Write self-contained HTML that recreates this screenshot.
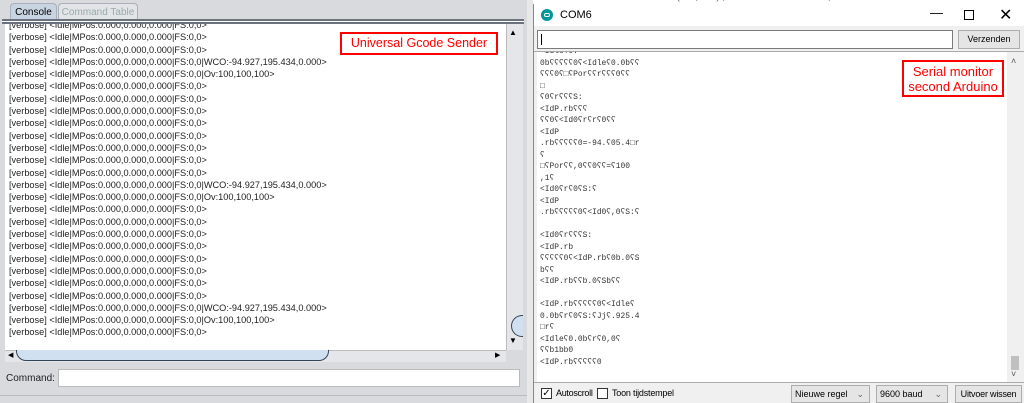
<!DOCTYPE html>
<html><head><meta charset="utf-8"><style>
*{box-sizing:border-box;margin:0;padding:0}
body{width:1024px;height:403px;overflow:hidden;background:#d9dbe0;font-family:"Liberation Sans",sans-serif;position:relative}
.abs{position:absolute}
#left{left:0;top:0;width:527px;height:403px;background:#d8dade}
.tab{position:absolute;top:3px;height:19px;font-size:10px;line-height:18px;text-align:center;border:1px solid #aab0ba;border-bottom:none;border-radius:4px 4px 0 0;white-space:nowrap}
#con{left:5px;top:24px;width:501px;height:326px;background:#fff;overflow:hidden;font-size:9.2px;color:#222;padding-left:4px}
#con div{height:12.3px;line-height:12.3px;white-space:nowrap}
#right{left:533px;top:4px;width:491px;height:399px;background:#f0f0f0;border-left:1px solid #888}
#out{left:537px;top:52px;width:470px;height:330px;background:#fff;overflow:hidden;font-family:"Liberation Mono","DejaVu Sans Mono",monospace;font-size:7.9px;color:#333;padding-left:3px}
#out div{height:11.5px;line-height:11.5px;white-space:pre}
.red{border:2px solid #f00;color:#f00;background:#fff;font-size:13px;text-align:center}
.sm{font-size:9px;color:#000;white-space:nowrap}
.box{border:1px solid #adadad;background:#e5e5e5}
</style></head><body>
<div class="abs" style="left:527px;top:0;width:6px;height:403px;background:#e8e8e8"></div>
<div id="left" class="abs">
 <div class="tab" style="left:10px;width:47px;background:#c9d4e2;color:#000">Console</div>
 <div class="tab" style="left:58px;width:80px;background:#e2e4e8;color:#9aa">Command Table</div>
 <div class="abs" style="left:2px;top:19px;width:522px;height:5px;border-top:2px solid #6a7280;border-bottom:2px solid #6a7280;background:#fff"></div>
 <div id="con" class="abs"><div style="margin-top:-5px">[verbose] &lt;Idle|MPos:0.000,0.000,0.000|FS:0,0&gt;</div>
<div>[verbose] &lt;Idle|MPos:0.000,0.000,0.000|FS:0,0&gt;</div><div>[verbose] &lt;Idle|MPos:0.000,0.000,0.000|FS:0,0&gt;</div>
<div>[verbose] &lt;Idle|MPos:0.000,0.000,0.000|FS:0,0|WCO:-94.927,195.434,0.000&gt;</div><div>[verbose] &lt;Idle|MPos:0.000,0.000,0.000|FS:0,0|Ov:100,100,100&gt;</div>
<div>[verbose] &lt;Idle|MPos:0.000,0.000,0.000|FS:0,0&gt;</div><div>[verbose] &lt;Idle|MPos:0.000,0.000,0.000|FS:0,0&gt;</div><div>[verbose] &lt;Idle|MPos:0.000,0.000,0.000|FS:0,0&gt;</div><div>[verbose] &lt;Idle|MPos:0.000,0.000,0.000|FS:0,0&gt;</div><div>[verbose] &lt;Idle|MPos:0.000,0.000,0.000|FS:0,0&gt;</div><div>[verbose] &lt;Idle|MPos:0.000,0.000,0.000|FS:0,0&gt;</div><div>[verbose] &lt;Idle|MPos:0.000,0.000,0.000|FS:0,0&gt;</div><div>[verbose] &lt;Idle|MPos:0.000,0.000,0.000|FS:0,0&gt;</div>
<div>[verbose] &lt;Idle|MPos:0.000,0.000,0.000|FS:0,0|WCO:-94.927,195.434,0.000&gt;</div><div>[verbose] &lt;Idle|MPos:0.000,0.000,0.000|FS:0,0|Ov:100,100,100&gt;</div>
<div>[verbose] &lt;Idle|MPos:0.000,0.000,0.000|FS:0,0&gt;</div><div>[verbose] &lt;Idle|MPos:0.000,0.000,0.000|FS:0,0&gt;</div><div>[verbose] &lt;Idle|MPos:0.000,0.000,0.000|FS:0,0&gt;</div><div>[verbose] &lt;Idle|MPos:0.000,0.000,0.000|FS:0,0&gt;</div><div>[verbose] &lt;Idle|MPos:0.000,0.000,0.000|FS:0,0&gt;</div><div>[verbose] &lt;Idle|MPos:0.000,0.000,0.000|FS:0,0&gt;</div><div>[verbose] &lt;Idle|MPos:0.000,0.000,0.000|FS:0,0&gt;</div><div>[verbose] &lt;Idle|MPos:0.000,0.000,0.000|FS:0,0&gt;</div>
<div>[verbose] &lt;Idle|MPos:0.000,0.000,0.000|FS:0,0|WCO:-94.927,195.434,0.000&gt;</div><div>[verbose] &lt;Idle|MPos:0.000,0.000,0.000|FS:0,0|Ov:100,100,100&gt;</div>
<div>[verbose] &lt;Idle|MPos:0.000,0.000,0.000|FS:0,0&gt;</div></div>
 <div class="red abs" style="left:340px;top:32px;width:158px;height:23px;line-height:19px;font-size:12.5px">Universal Gcode Sender</div>
 <div class="abs" style="left:506px;top:24px;width:17px;height:326px;background:#e4e6ea;border-left:1px solid #bbb"></div>
 <div class="abs" style="left:509px;top:28px;font-size:8px">▲</div>
 <div class="abs" style="left:509px;top:336px;font-size:8px">▼</div>
 <div class="abs" style="left:511px;top:315px;width:12px;height:22px;border:1px solid #345;border-right:none;border-radius:11px 0 0 11px;background:#d0e0f0"></div>
 <div class="abs" style="left:5px;top:350px;width:501px;height:12px;background:#e4e6ea;border-top:1px solid #bbb"></div>
 <div class="abs" style="left:16px;top:350px;width:313px;height:11px;border:1px solid #345;border-top:none;border-radius:0 0 10px 10px;background:#d0e0f0"></div>
 <div class="abs" style="left:8px;top:351px;font-size:7px">◀</div>
 <div class="abs" style="left:495px;top:351px;font-size:7px">▶</div>
 <div class="abs" style="left:6px;top:373px;font-size:10px;color:#222">Command:</div>
 <div class="abs" style="left:58px;top:369px;width:462px;height:18px;background:#fff;border:1px solid #bbb"></div>
 <div class="abs" style="left:0;top:395px;width:527px;height:1px;background:#bbb"></div>
</div>
<div class="abs" style="left:533px;top:0;width:491px;height:4px;background:#fff;overflow:hidden"><div style="font-family:'Liberation Mono',monospace;font-size:11px;color:#777;margin-top:-9px;padding-left:10px">SoftwareSerial <span style="color:#c33">SUART</span>(15, 3); //SRX = DPIO-2; STX = DPIO-3</div></div>
<div id="right" class="abs">
 <div class="abs" style="left:0;top:0;width:490px;height:22px;background:#fff"></div>
 <div class="abs" style="left:7px;top:5px;width:12px;height:12px;border-radius:50%;background:#00979c"></div>
 <div class="abs" style="left:10px;top:9px;width:6px;height:4px;border:1px solid #fff;border-radius:2px"></div>
 <div class="abs" style="left:26px;top:5px;font-size:11px;color:#000">COM6</div>
 <div class="abs" style="left:396px;top:1px;font-size:13px;color:#000">—</div>
 <div class="abs" style="left:430px;top:6px;width:10px;height:10px;border:1px solid #000"></div>
 <div class="abs" style="left:465px;top:1px;font-size:16px;color:#000">✕</div>
 <div class="abs" style="left:3px;top:26px;width:416px;height:19px;background:#fff;border:1px solid #7a7a7a"><div style="position:absolute;left:3px;top:3px;width:1px;height:11px;background:#000"></div></div>
 <div class="abs box sm" style="left:424px;top:26px;width:62px;height:19px;text-align:center;line-height:17px">Verzenden</div>
 <div class="abs" style="left:0;top:47px;width:490px;height:1px;background:#aaa"></div>
 <div class="abs" style="left:474px;top:48px;width:13px;height:330px;background:#f0f0f0"></div>
 <div class="abs" style="left:477px;top:352px;width:8px;height:14px;background:#c0c0c0"></div>
 <div class="abs sm" style="left:477px;top:52px;color:#555">˄</div>
 <div class="abs sm" style="left:477px;top:365px;color:#555">˅</div>
 <div class="abs" style="left:0;top:378px;width:490px;height:1px;background:#aaa"></div>
 <div class="abs" style="left:7px;top:384px;width:11px;height:11px;border:1px solid #333;background:#fff;font-size:10px;line-height:9px;text-align:center">✓</div>
 <div class="abs sm" style="left:22px;top:384px;letter-spacing:-0.3px">Autoscroll</div>
 <div class="abs" style="left:63px;top:384px;width:11px;height:11px;border:1px solid #333;background:#fff"></div>
 <div class="abs sm" style="left:78px;top:384px;letter-spacing:-0.2px">Toon tijdstempel</div>
 <div class="abs box sm" style="left:257px;top:381px;width:79px;height:18px;line-height:16px;padding-left:3px">Nieuwe regel<span style="position:absolute;right:5px;color:#666">⌄</span></div>
 <div class="abs box sm" style="left:342px;top:381px;width:72px;height:18px;line-height:16px;padding-left:3px">9600 baud<span style="position:absolute;right:5px;color:#666">⌄</span></div>
 <div class="abs box sm" style="left:421px;top:381px;width:67px;height:18px;line-height:16px;text-align:center;letter-spacing:-0.2px">Uitvoer wissen</div>
</div>
<div id="out" class="abs"><div style="margin-top:-6px">&lt;Idleʕ0.</div><div>0bʕʕʕʕʕ0ʕ&lt;Idleʕ0.0bʕʕ</div><div>ʕʕʕ0ʕ□ʕPorʕʕrʕʕʕ0ʕʕ</div><div>□</div><div>ʕ0ʕrʕʕʕS:</div><div>&lt;IdP.rbʕʕʕ</div><div>ʕʕ0ʕ&lt;Id0ʕrʕrʕ0ʕʕ</div><div>&lt;IdP</div><div>.rbʕʕʕʕʕ0=-94.ʕ05.4□r</div><div>ʕ</div><div>□ʕPorʕʕ,0ʕʕ0ʕʕ=ʕ100</div><div>,1ʕ</div><div>&lt;Id0ʕrʕ0ʕS:ʕ</div><div>&lt;IdP</div><div>.rbʕʕʕʕʕ0ʕ&lt;Id0ʕ,0ʕS:ʕ</div><div></div><div>&lt;Id0ʕrʕʕʕS:</div><div>&lt;IdP.rb</div><div>ʕʕʕʕʕ0ʕ&lt;IdP.rbʕ0b.0ʕS</div><div>bʕʕ</div><div>&lt;IdP.rbʕʕb.0ʕSbʕʕ</div><div></div><div>&lt;IdP.rbʕʕʕʕʕ0ʕ&lt;Idleʕ</div><div>0.0bʕrʕ0ʕS:ʕJjʕ.925.4</div><div>□rʕ</div><div>&lt;Idleʕ0.0bʕrʕ0,0ʕ</div><div>ʕʕb1bb0</div><div>&lt;IdP.rbʕʕʕʕʕ0</div></div>
<div class="red abs" style="left:902px;top:60px;width:102px;height:37px;line-height:15px;padding-top:2px">Serial monitor<br>second Arduino</div>
</body></html>
